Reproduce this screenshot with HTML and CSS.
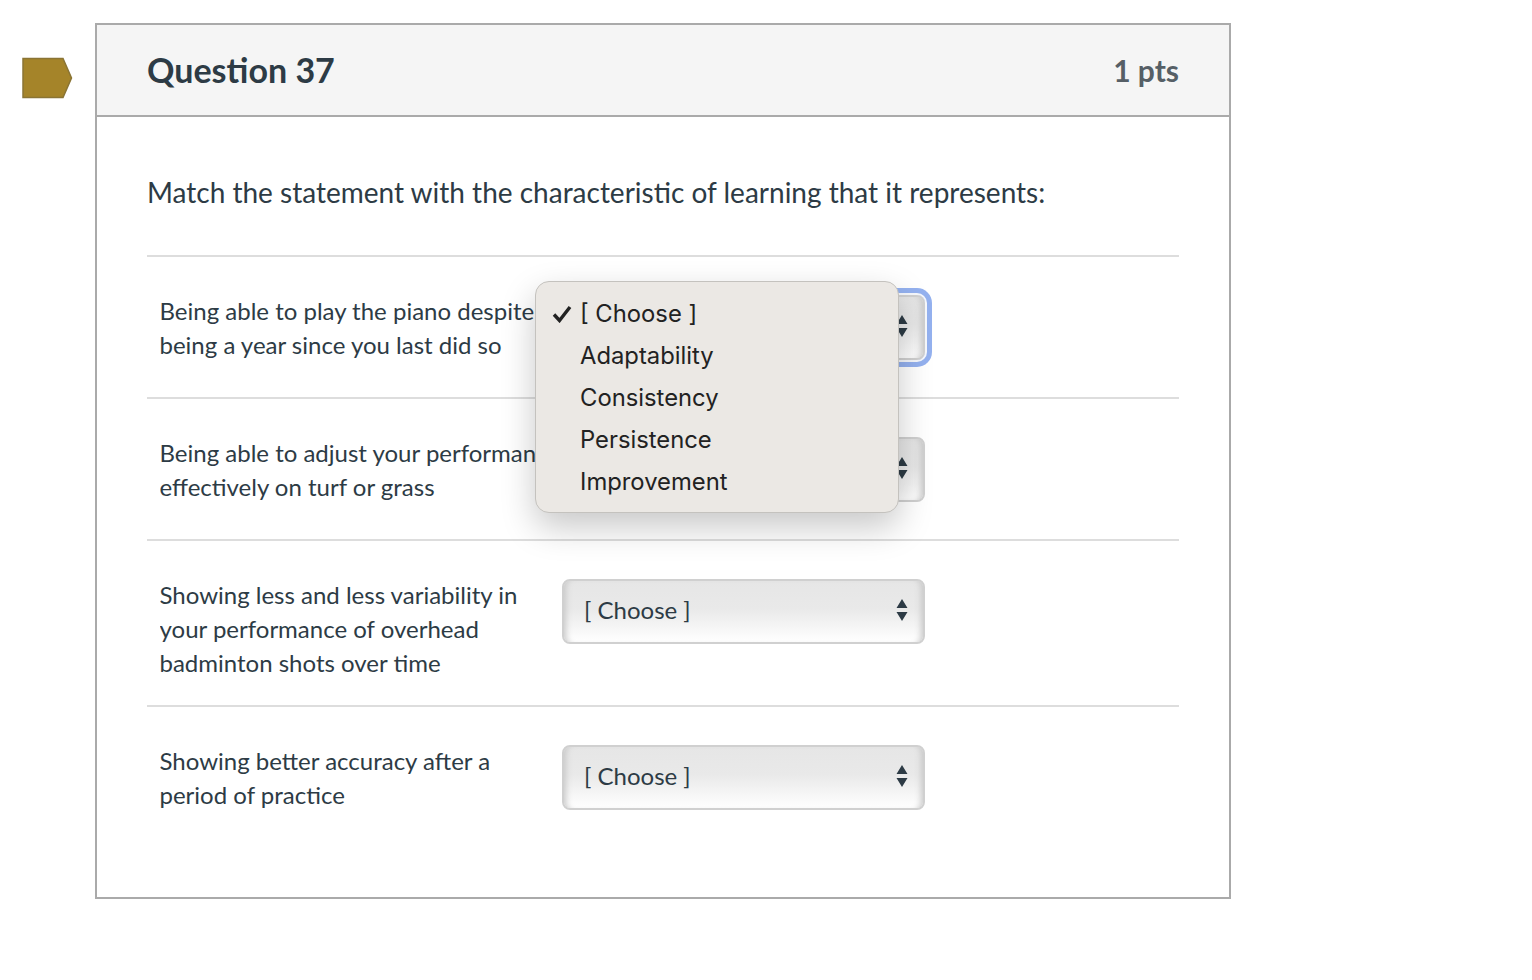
FILE: index.html
```html
<!DOCTYPE html>
<html lang="en">
<head>
    <meta charset="UTF-8">
    <title>Question 37</title>
    <link rel="stylesheet" href="styles.css">
</head>
<body>
    <div class="question">
        <svg class="flag" width="51" height="42" viewBox="0 0 51 42">
            <path d="M1 1.5H41L49.5 21L41 40.5H1Z" fill="#a58429" stroke="#8a7434" stroke-width="1.5"/>
        </svg>
        <div class="question-header">
            <h2>Question 37</h2>
            <span class="pts">1 pts</span>
        </div>
        <div class="question-body">
            <p class="question-text">Match the statement with the characteristic of learning that it represents:</p>

            <div class="match-row">
                <div class="match-label">Being able to play the piano despite it<br>being a year since you last did so</div>
                <div class="select-wrap">
                    <div class="fake-select focused">
                        <span>[ Choose ]</span>
                        <svg class="arrows" width="12" height="22" viewBox="0 0 12 22"><path d="M6 0L11.5 9H0.5ZM6 22L0.5 13H11.5Z"/></svg>
                    </div>
                    <ul class="popup">
                        <li>
                            <svg class="check" width="20" height="18" viewBox="0 0 20 18"><path d="M2 9.5L7.5 15.5L18 2" fill="none" stroke="#222" stroke-width="3.4"/></svg>
                            [ Choose ]
                        </li>
                        <li>Adaptability</li>
                        <li>Consistency</li>
                        <li>Persistence</li>
                        <li>Improvement</li>
                    </ul>
                </div>
            </div>

            <div class="match-row">
                <div class="match-label">Being able to adjust your performance<br>effectively on turf or grass</div>
                <div class="select-wrap">
                    <div class="fake-select">
                        <span>[ Choose ]</span>
                        <svg class="arrows" width="12" height="22" viewBox="0 0 12 22"><path d="M6 0L11.5 9H0.5ZM6 22L0.5 13H11.5Z"/></svg>
                    </div>
                </div>
            </div>

            <div class="match-row">
                <div class="match-label">Showing less and less variability in<br>your performance of overhead<br>badminton shots over time</div>
                <div class="select-wrap">
                    <div class="fake-select">
                        <span>[ Choose ]</span>
                        <svg class="arrows" width="12" height="22" viewBox="0 0 12 22"><path d="M6 0L11.5 9H0.5ZM6 22L0.5 13H11.5Z"/></svg>
                    </div>
                </div>
            </div>

            <div class="match-row">
                <div class="match-label">Showing better accuracy after a<br>period of practice</div>
                <div class="select-wrap">
                    <div class="fake-select">
                        <span>[ Choose ]</span>
                        <svg class="arrows" width="12" height="22" viewBox="0 0 12 22"><path d="M6 0L11.5 9H0.5ZM6 22L0.5 13H11.5Z"/></svg>
                    </div>
                </div>
            </div>
        </div>
    </div>
</body>
</html>
```

FILE: styles.css
```css
body {
    margin: 0;
    background-color: #fff;
    font-family: Lato, sans-serif;
    color: #2d3b45;
    min-height: 980px;
    box-sizing: border-box;
    padding: 23px 0 0 95px;
}

.question {
    position: relative;
    width: 1136px;
    height: 876px;
    box-sizing: border-box;
    border: 2px solid #aaa;
}

.flag {
    position: absolute;
    left: -75px;
    top: 32px;
}

.question-header {
    display: flex;
    justify-content: space-between;
    align-items: center;
    height: 92px;
    box-sizing: border-box;
    padding: 0 50px 2px;
    background-color: #f5f5f5;
    border-bottom: 2px solid #aaa;
}

.question-header h2 {
    margin: 0;
    font-size: 34px;
    font-weight: 700;
}

.pts {
    padding-top: 2px;
    font-size: 30px;
    font-weight: 700;
    color: #565f66;
}

.question-body {
    padding: 57px 50px 0;
}

.question-text {
    margin: 0 0 45px;
    font-size: 28px;
    line-height: 36px;
}

.match-row {
    display: flex;
    box-sizing: border-box;
    min-height: 142px;
    padding: 37px 0 25px 12.5px;
    border-top: 2px solid #ddd;
    font-size: 24px;
    line-height: 34px;
}

.match-label {
    width: 402.5px;
    flex-shrink: 0;
    white-space: nowrap;
    overflow: hidden;
}

.select-wrap {
    position: relative;
    padding-top: 1px;
}

.fake-select {
    display: flex;
    justify-content: space-between;
    align-items: center;
    width: 363px;
    height: 65px;
    box-sizing: border-box;
    padding: 0 15px 4px 20px;
    border: 2px solid #d0d0d0;
    border-radius: 8px;
    background: linear-gradient(#e6e6e6 0%, #e9e9e9 45%, #ffffff 100%);
    box-shadow: inset 7px 0 6px -5px #c8c8c8, inset -7px 0 6px -5px #c8c8c8;
    font-size: 24px;
}

.fake-select.focused {
    box-shadow: 0 0 0 2px #f6f8fc, 0 0 0 7px #94b1ef, inset -7px 0 6px -5px #c8c8c8;
}

.arrows {
    fill: #2d3b45;
}

.popup {
    position: absolute;
    z-index: 2;
    left: -27px;
    top: -13px;
    width: 364px;
    height: 232px;
    box-sizing: border-box;
    margin: 0;
    padding: 11px 0 0 44px;
    list-style: none;
    background-color: #ebe8e4;
    border: 1px solid #c4c2be;
    border-radius: 14px;
    box-shadow: 0 14px 34px rgba(0, 0, 0, 0.22);
    font-family: Inter, sans-serif;
    font-size: 23.8px;
    line-height: 42px;
    color: #222;
}

.popup li {
    position: relative;
}

.check {
    position: absolute;
    left: -28px;
    top: 12px;
}
```
